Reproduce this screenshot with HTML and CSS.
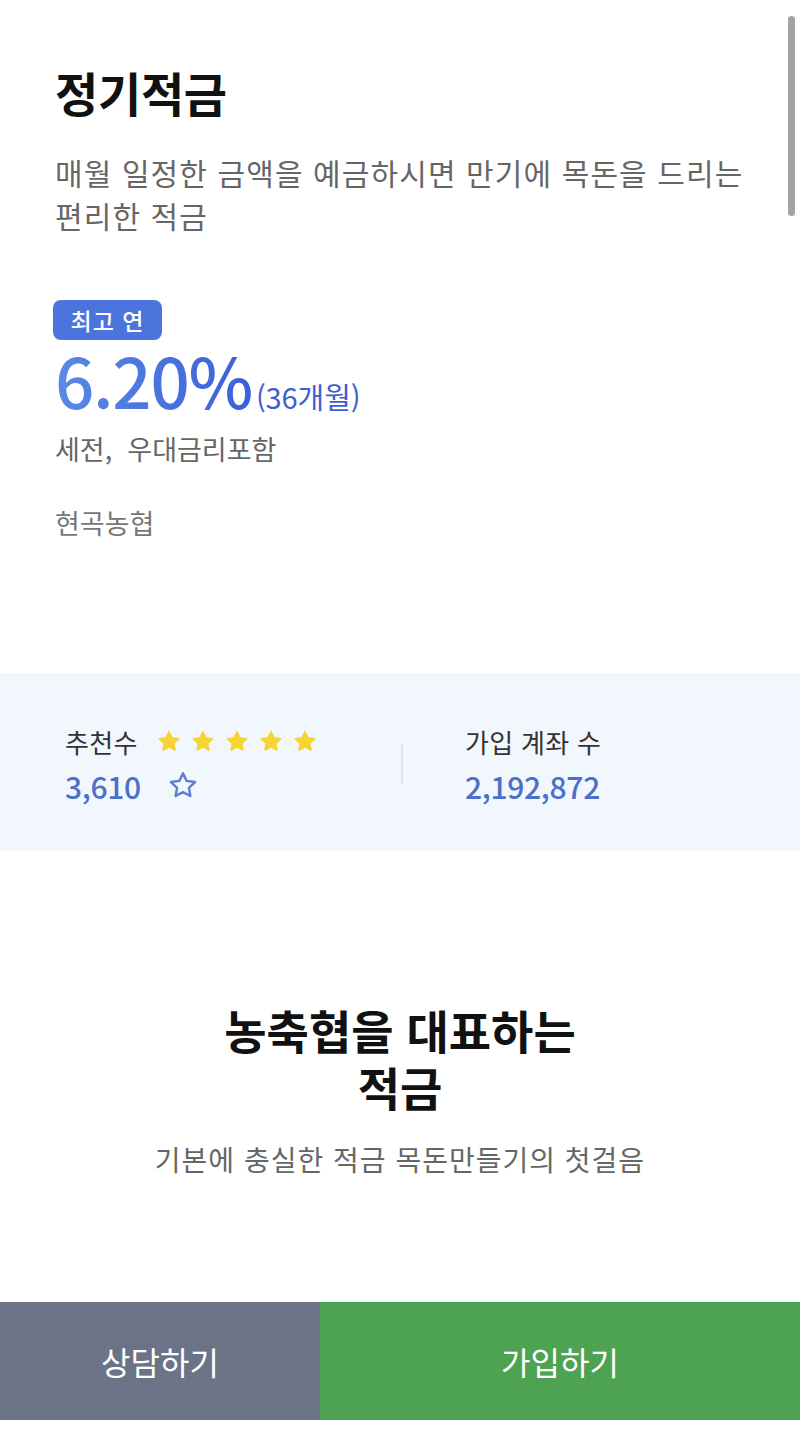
FILE: index.html
```html
<!DOCTYPE html>
<html lang="ko">
<head>
<meta charset="utf-8">
<title>정기적금</title>
<link rel="stylesheet" href="styles.css">
</head>
<body>
<div class="page">
  <section class="intro">
    <h1 class="title">정기적금</h1>
    <p class="desc">매월 일정한 금액을 예금하시면 만기에 목돈을 드리는 편리한 적금</p>
    <div class="rate-block">
      <span class="badge">최고 연</span>
      <div class="rate"><span class="rate-num">6.20%</span><span class="rate-term">(36개월)</span></div>
      <p class="rate-note">세전,&nbsp; 우대금리포함</p>
    </div>
    <p class="bank">현곡농협</p>
  </section>

  <section class="stats">
    <div class="stat stat-left">
      <div class="stat-label">
        <span>추천수</span>
        <span class="stars">
          <svg viewBox="0 0 24 24" class="star"><path d="M12 2.6l2.7 5.6 6.1.8-4.5 4.2 1.1 6.1L12 16.4l-5.4 2.9 1.1-6.1-4.5-4.2 6.1-.8z" fill="#f6d433" stroke="#f6d433" stroke-width="1.6" stroke-linejoin="round"/></svg>
          <svg viewBox="0 0 24 24" class="star"><path d="M12 2.6l2.7 5.6 6.1.8-4.5 4.2 1.1 6.1L12 16.4l-5.4 2.9 1.1-6.1-4.5-4.2 6.1-.8z" fill="#f6d433" stroke="#f6d433" stroke-width="1.6" stroke-linejoin="round"/></svg>
          <svg viewBox="0 0 24 24" class="star"><path d="M12 2.6l2.7 5.6 6.1.8-4.5 4.2 1.1 6.1L12 16.4l-5.4 2.9 1.1-6.1-4.5-4.2 6.1-.8z" fill="#f6d433" stroke="#f6d433" stroke-width="1.6" stroke-linejoin="round"/></svg>
          <svg viewBox="0 0 24 24" class="star"><path d="M12 2.6l2.7 5.6 6.1.8-4.5 4.2 1.1 6.1L12 16.4l-5.4 2.9 1.1-6.1-4.5-4.2 6.1-.8z" fill="#f6d433" stroke="#f6d433" stroke-width="1.6" stroke-linejoin="round"/></svg>
          <svg viewBox="0 0 24 24" class="star"><path d="M12 2.6l2.7 5.6 6.1.8-4.5 4.2 1.1 6.1L12 16.4l-5.4 2.9 1.1-6.1-4.5-4.2 6.1-.8z" fill="#f6d433" stroke="#f6d433" stroke-width="1.6" stroke-linejoin="round"/></svg>
        </span>
      </div>
      <div class="stat-value">
        <span>3,610</span>
        <svg viewBox="0 0 24 24" class="star-outline"><path d="M12 3l2.6 5.4 5.9.8-4.3 4.1 1 5.8L12 16.3l-5.2 2.8 1-5.8-4.3-4.1 5.9-.8z" fill="none" stroke="#5a7fd0" stroke-width="1.7" stroke-linejoin="round"/></svg>
      </div>
    </div>
    <div class="divider"></div>
    <div class="stat stat-right">
      <div class="stat-label"><span>가입 계좌 수</span></div>
      <div class="stat-value"><span>2,192,872</span></div>
    </div>
  </section>

  <section class="feature">
    <h2 class="feature-title">농축협을 대표하는<br>적금</h2>
    <p class="feature-desc">기본에 충실한 적금 목돈만들기의 첫걸음</p>
  </section>

  <div class="actions">
    <button class="btn btn-consult">상담하기</button>
    <button class="btn btn-join">가입하기</button>
  </div>
</div>
<div class="scrollbar"></div>
</body>
</html>
```

FILE: styles.css
```css
* { box-sizing: border-box; }
html, body { margin: 0; padding: 0; background: #ffffff; }
body {
  font-family: "Noto Sans CJK KR", "Noto Sans", sans-serif;
  color: #111;
  width: 800px;
  height: 1434px;
  overflow: hidden;
}
.page { display: flex; flex-direction: column; }

.intro { padding: 60px 40px 0 55px; height: 673px; }
.title {
  margin: 0;
  font-size: 47px;
  font-weight: 700;
  line-height: 64px;
  color: #111;
  letter-spacing: -0.3px;
}
.desc {
  margin: 27px 0 0 0;
  font-size: 30px;
  line-height: 43px;
  color: #666;
  font-weight: 400;
  letter-spacing: 1.1px;
}
.rate-block { margin-top: 63px; display: flex; flex-direction: column; align-items: flex-start; }
.badge {
  display: inline-flex;
  align-items: center;
  justify-content: center;
  width: 109px;
  height: 40px;
  margin-left: -2px;
  border-radius: 8px;
  background: #4c74dd;
  color: #fff;
  font-size: 23px;
  font-weight: 500;
  letter-spacing: 1px;
}
.rate { display: flex; align-items: baseline; margin-top: 0; height: 78px; line-height: 78px; }
.rate-num {
  font-size: 69px;
  font-weight: 500;
  line-height: 78px;
  letter-spacing: -1.3px;
  background: linear-gradient(90deg, #5b8ae6 0%, #3b5fd9 100%);
  -webkit-background-clip: text;
  background-clip: text;
  color: transparent;
}
.rate-term { font-size: 29px; line-height: 40px; color: #3d5fd4; margin-left: 4px; letter-spacing: -0.1px; }
.rate-note { margin: 13px 0 0 0; font-size: 27px; line-height: 36px; color: #666; }
.bank { margin: 38px 0 0 0; font-size: 27px; line-height: 36px; color: #777; }

.stats {
  height: 178px;
  background: #f2f7fd;
  display: flex;
  align-items: center;
  padding: 0 0 0 65px;
}
.stat { display: flex; flex-direction: column; gap: 8px; }
.stat-left { width: 336px; }
.stat-label { display: flex; align-items: center; font-size: 26px; line-height: 34px; color: #333; letter-spacing: 0.3px; padding-top: 6px; }
.stars { display: flex; gap: 8px; margin-left: 18px; }
.star { width: 26px; height: 26px; display: block; }
.stat-value { display: flex; align-items: center; font-size: 30px; line-height: 38px; color: #4a70c9; font-weight: 500; letter-spacing: -0.3px; }
.star-outline { width: 34px; height: 34px; margin-left: 25px; display: block; }
.divider { width: 2px; height: 42px; background: #dde2ea; margin-top: 4px; }
.stat-right { margin-left: 62px; }

.feature { height: 451px; display: flex; flex-direction: column; align-items: center; padding-top: 150px; }
.feature-title {
  margin: 0;
  text-align: center;
  font-size: 46px;
  line-height: 57px;
  font-weight: 700;
  color: #111;
}
.feature-desc { margin: 26px 0 0 0; font-size: 28px; line-height: 36px; color: #666; letter-spacing: 1px; }

.actions { display: flex; height: 118px; }
.btn {
  border: 0;
  margin: 0;
  padding: 0;
  font-family: inherit;
  font-size: 32px;
  font-weight: 400;
  color: #fff;
}
.btn-consult { width: 320px; background: #6b7386; }
.btn-join { flex: 1; background: #4ea352; }

.scrollbar {
  position: fixed;
  top: 16px;
  right: 5px;
  width: 7px;
  height: 200px;
  border-radius: 4px;
  background: #a3a3a3;
}
```
